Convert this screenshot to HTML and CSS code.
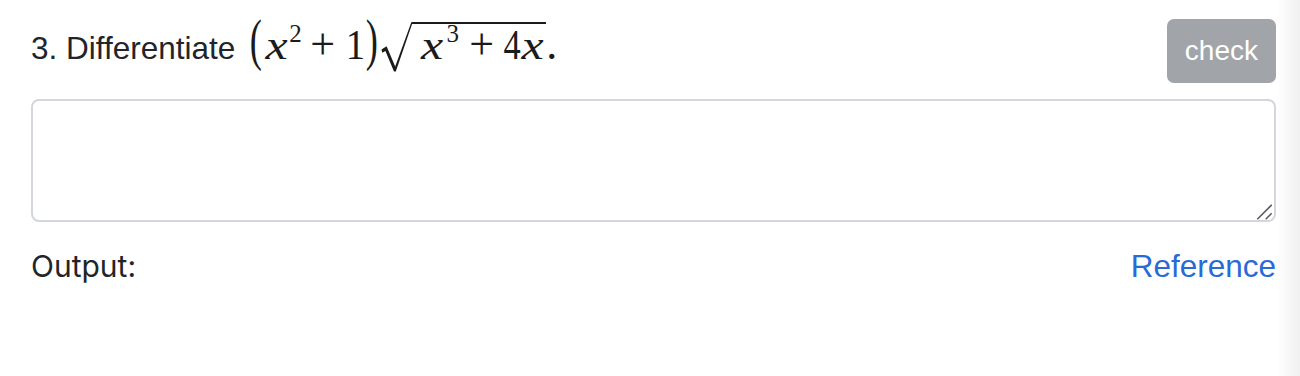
FILE: index.html
```html
<!DOCTYPE html>
<html lang="en">
<head>
<meta charset="utf-8">
<title>Differentiate</title>
<link rel="stylesheet" href="styles.css">
</head>
<body>
<div class="page">
  <div class="head">
    <h1 class="q">3. Differentiate<span class="math"><span class="paren pl">(</span><span class="mx x1">x</span><span class="sup s2">2</span><span class="op op1">+</span><span class="mn one">1</span><span class="paren pr">)</span><svg class="rad" viewBox="0 0 32 50" width="32" height="50" aria-hidden="true"><polygon points="0.5,27.6 5.6,24.2 14.2,44.6 30.4,0 31.6,0.6 14.8,49.6 13,49.6 4.4,29 1.3,30.7" fill="#1b1b1b"/></svg><span class="rad-body"><span class="mx x2">x</span><span class="sup s3">3</span><span class="op op2">+</span><span class="mn four">4</span><span class="mx x3">x</span></span><span class="dot">.</span></span></h1>
    <button class="btn" type="button" disabled>check</button>
  </div>
  <div class="field">
    <textarea class="answer" rows="2" aria-label="Answer"></textarea>
    <svg class="grip" viewBox="0 0 16 16" width="16" height="16" aria-hidden="true"><path d="M1.3 15.2 L15.7 0.8 M9.7 15.2 L15.7 9.2" stroke="#5c5c5c" stroke-width="1.6" fill="none"/></svg>
  </div>
  <div class="foot">
    <span class="out">Output:</span>
    <a class="ref" href="#">Reference</a>
  </div>
</div>
</body>
</html>
```

FILE: styles.css
```css
html {
  background: linear-gradient(to right, #ffffff calc(100% - 24px), #f0f0f0);
  min-height: 100%;
}
body {
  margin: 0;
  color: #212529;
  font-family: "Liberation Sans", Arial, sans-serif;
}
.page {
  padding: 19px 24px 0 31px;
}
.head {
  display: flex;
  justify-content: space-between;
  align-items: center;
  height: 64px;
  margin-bottom: 16px;
}
.q {
  margin: 0 0 6px;
  font-size: 31.5px;
  font-weight: 400;
  line-height: 56px;
  white-space: nowrap;
}
.math {
  font-family: "Liberation Serif", "DejaVu Serif", serif;
  font-size: 44px;
  line-height: 0;
  margin-left: 12px;
  color: #1b1b1b;
}
.math > span,
.rad-body > span {
  display: inline-block;
  text-align: center;
  line-height: 0;
}
.paren {
  font-size: 56px;
  width: 16px;
  transform: scaleX(0.65);
}
.pr {
  margin-left: 3px;
}
.mx {
  font-style: italic;
  font-size: 40px;
  transform: scaleX(1.25);
}
.x1 {
  width: 25px;
  margin-left: 1px;
}
.x2 {
  width: 26px;
  margin-left: 7px;
}
.x3 {
  width: 27px;
  margin-left: 1px;
}
.sup {
  font-size: 25px;
  position: relative;
  top: -17px;
}
.s2 {
  width: 12px;
}
.s3 {
  width: 15px;
}
.op {
  width: 24px;
}
.op1 {
  margin-left: 9px;
}
.op2 {
  margin-left: 9px;
}
.mn {
  font-size: 43px;
}
.one {
  width: 15px;
  margin-left: 11px;
  transform: scaleX(0.9);
}
.four {
  width: 16px;
  margin-left: 9px;
  transform: scaleX(0.8);
}
.rad {
  vertical-align: -13px;
  margin-left: 2px;
}
.math > .rad-body {
  border-top: 2px solid #1b1b1b;
  padding-top: 21px;
  margin-left: -1px;
  text-align: left;
}
.dot {
  width: 8px;
}
.btn {
  font-family: "Liberation Sans", Arial, sans-serif;
  font-size: 28px;
  line-height: 42px;
  height: 64px;
  padding: 9px 16px;
  color: #ffffff;
  background: #a1a5a9;
  border: 2px solid #a1a5a9;
  border-radius: 7px;
  box-sizing: border-box;
}
.field {
  position: relative;
}
.answer {
  display: block;
  box-sizing: border-box;
  width: 100%;
  height: 123px;
  margin: 0;
  padding: 12px 24px;
  font-family: "Liberation Sans", Arial, sans-serif;
  font-size: 32px;
  border: 2px solid #d3d6db;
  border-radius: 8px;
  background: #ffffff;
  resize: none;
}
.grip {
  position: absolute;
  right: 4px;
  bottom: 2px;
}
.foot {
  display: flex;
  justify-content: space-between;
  align-items: baseline;
  margin-top: 20px;
  font-size: 31.5px;
  line-height: 48px;
}
.out {
  font-family: Inter, "Liberation Sans", sans-serif;
  font-size: 30px;
}
.ref {
  color: #2a69d8;
  text-decoration: none;
}
```
